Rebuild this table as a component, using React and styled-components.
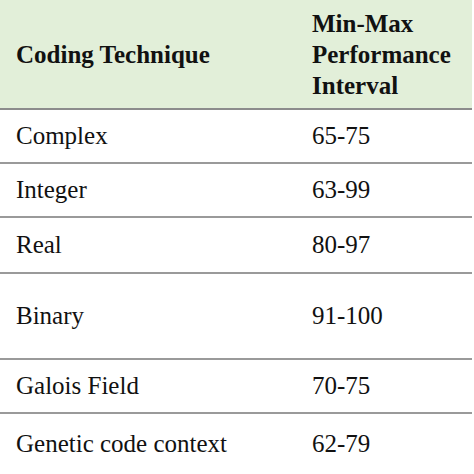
import React from "react";
import styled, { createGlobalStyle } from "styled-components";

const GlobalStyle = createGlobalStyle`
  html, body {
    margin: 0;
    padding: 0;
    background: #ffffff;
  }
`;

const Table = styled.div`
  width: 472px;
  height: 474px;
  display: flex;
  flex-direction: column;
  font-family: "Liberation Serif", "Times New Roman", serif;
  font-size: 25px;
  color: #111111;
  overflow: hidden;
`;

const HeaderRow = styled.div`
  display: grid;
  grid-template-columns: 296px 1fr;
  align-items: center;
  height: 110px;
  flex-shrink: 0;
  box-sizing: border-box;
  background: #e2efd9;
  border-bottom: 2px solid #8c8c8c;
  font-weight: bold;
  line-height: 31px;
`;

const Row = styled.div`
  display: grid;
  grid-template-columns: 296px 1fr;
  align-items: center;
  height: ${({ h }) => h}px;
  flex-shrink: 0;
  box-sizing: border-box;
  border-bottom: ${({ last }) => (last ? "none" : "2px solid #9a9a9a")};
  line-height: 28px;
`;

const Cell = styled.div`
  padding-left: 16px;
`;

const rows = [
  ["Complex", "65-75", 54],
  ["Integer", "63-99", 54],
  ["Real", "80-97", 56],
  ["Binary", "91-100", 86],
  ["Galois Field", "70-75", 54],
  ["Genetic code context", "62-79", 60],
];

export default function App() {
  return (
    <>
      <GlobalStyle />
      <Table>
        <HeaderRow>
          <Cell>Coding Technique</Cell>
          <Cell>
            Min-Max
            <br />
            Performance
            <br />
            Interval
          </Cell>
        </HeaderRow>
        {rows.map(([name, range, h], i) => (
          <Row key={name} h={h} last={i === rows.length - 1}>
            <Cell>{name}</Cell>
            <Cell>{range}</Cell>
          </Row>
        ))}
      </Table>
    </>
  );
}
